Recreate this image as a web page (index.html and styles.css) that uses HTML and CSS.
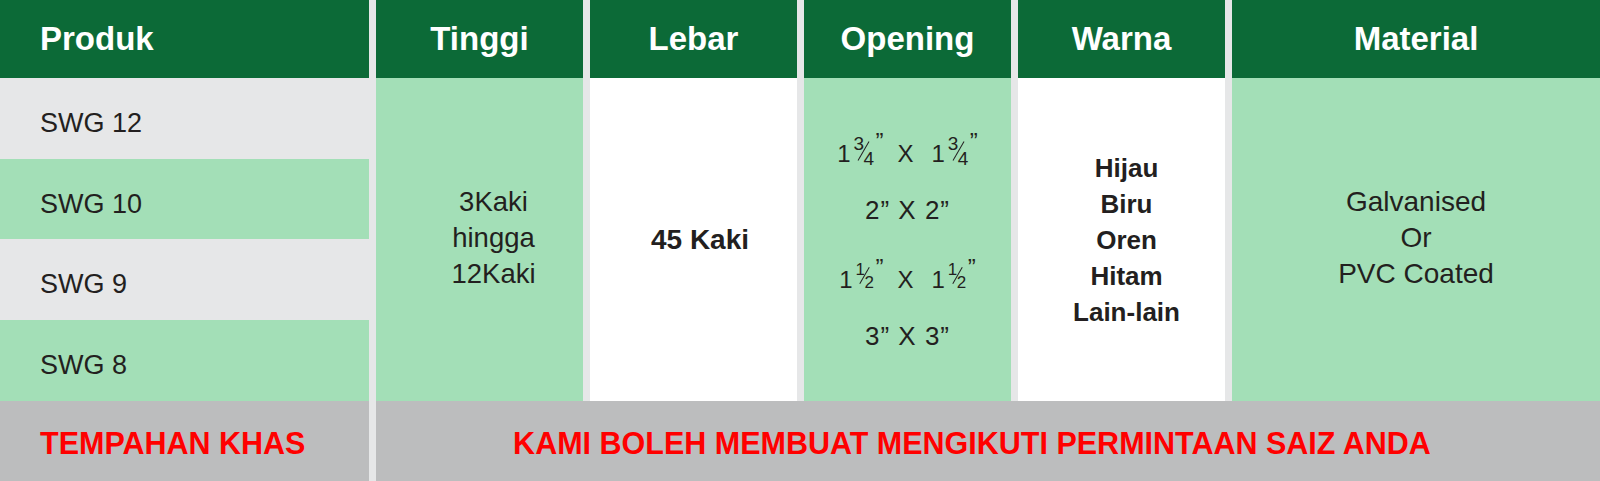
FILE: index.html
```html
<!DOCTYPE html>
<html lang="ms">
<head>
<meta charset="utf-8">
<title>Spesifikasi Produk</title>
<link rel="stylesheet" href="styles.css">
</head>
<body>
<div class="table">
  <div class="hd hd-left c1">Produk</div>
  <div class="hd c2">Tinggi</div>
  <div class="hd c3">Lebar</div>
  <div class="hd c4">Opening</div>
  <div class="hd c5">Warna</div>
  <div class="hd c6">Material</div>

  <div class="prod r2">SWG 12</div>
  <div class="prod r3 green">SWG 10</div>
  <div class="prod r4">SWG 9</div>
  <div class="prod r5 green">SWG 8</div>

  <div class="body c2 green tinggi">
    <div>3Kaki</div>
    <div>hingga</div>
    <div>12Kaki</div>
  </div>
  <div class="body c3 white lebar">
    <div>45 Kaki</div>
  </div>
  <div class="body c4 green opening">
    <div class="ln small">1<span class="fr big"><span class="n">3</span><span class="sl"></span><span class="d">4</span></span><span class="qt">&#8221;</span><span class="x">X</span>1<span class="fr big"><span class="n">3</span><span class="sl"></span><span class="d">4</span></span><span class="qt">&#8221;</span></div>
    <div class="ln large l2">2&#8221; X 2&#8221;</div>
    <div class="ln small l3">1<span class="fr half"><span class="n">1</span><span class="sl"></span><span class="d">2</span></span><span class="qt">&#8221;</span><span class="x">X</span>1<span class="fr half"><span class="n">1</span><span class="sl"></span><span class="d">2</span></span><span class="qt">&#8221;</span></div>
    <div class="ln large l4">3&#8221; X 3&#8221;</div>
  </div>
  <div class="body c5 white warna">
    <div>Hijau</div>
    <div>Biru</div>
    <div>Oren</div>
    <div>Hitam</div>
    <div>Lain-lain</div>
  </div>
  <div class="body c6 green material">
    <div>Galvanised</div>
    <div>Or</div>
    <div>PVC Coated</div>
  </div>

  <div class="foot foot-left">TEMPAHAN KHAS</div>
  <div class="foot foot-wide">KAMI BOLEH MEMBUAT MENGIKUTI PERMINTAAN SAIZ ANDA</div>
</div>
</body>
</html>
```

FILE: styles.css
```css
html, body {
  margin: 0;
  padding: 0;
}

body {
  background: #e6e7e8;
  font-family: "Liberation Sans", Arial, sans-serif;
  color: #231f20;
}

.table {
  display: grid;
  grid-template-columns: 369px 207px 207px 207px 207px 368px;
  grid-template-rows: 78px 81px 80px 81px 81px 80px;
  column-gap: 7px;
  width: 1600px;
  height: 481px;
}

.c1 { grid-column: 1; }
.c2 { grid-column: 2; }
.c3 { grid-column: 3; }
.c4 { grid-column: 4; }
.c5 { grid-column: 5; }
.c6 { grid-column: 6; }

.hd {
  grid-row: 1;
  background: #0c6a37;
  color: #ffffff;
  font-weight: bold;
  font-size: 33px;
  display: flex;
  align-items: center;
  justify-content: center;
}

.hd-left {
  justify-content: flex-start;
  padding-left: 40px;
}

.prod {
  grid-column: 1;
  display: flex;
  align-items: center;
  padding-left: 40px;
  padding-top: 10px;
  box-sizing: border-box;
  font-size: 27px;
}

.r2 { grid-row: 2; }
.r3 { grid-row: 3; }
.r4 { grid-row: 4; }
.r5 { grid-row: 5; }

.green { background: #a3dfb7; }
.white { background: #ffffff; }

.body {
  grid-row: 2 / 6;
  display: flex;
  flex-direction: column;
  justify-content: center;
  align-items: center;
  text-align: center;
  box-sizing: border-box;
}

.tinggi {
  font-size: 27.5px;
  line-height: 36px;
  padding-left: 28px;
  padding-bottom: 4px;
}

.lebar {
  font-size: 28px;
  font-weight: bold;
  padding-left: 13px;
}

.warna {
  font-size: 26px;
  font-weight: bold;
  line-height: 36px;
  padding-left: 10px;
}

.material {
  font-size: 28px;
  line-height: 36px;
  padding-bottom: 4px;
}

.opening {
  padding-top: 10px;
}

.ln {
  line-height: 36px;
  white-space: nowrap;
}

.ln.small { font-size: 24px; }
.ln.large { font-size: 26px; letter-spacing: 1px; }
.l2 { margin-top: 20px; }
.l3 { margin-top: 34px; }
.l4 { margin-top: 20px; }

.fr {
  display: inline-grid;
  margin-left: 3px;
}

.fr.big {
  font-size: 19px;
  line-height: 15px;
  grid-template-columns: 10px 11px;
  grid-template-rows: 15px 15px;
  vertical-align: 12px;
}

.fr.half {
  font-size: 17px;
  line-height: 13px;
  grid-template-columns: 9px 10px;
  grid-template-rows: 13px 13px;
  vertical-align: 13px;
}

.fr .n {
  grid-area: 1 / 1 / 2 / 2;
  justify-self: start;
}

.fr .d {
  grid-area: 2 / 2 / 3 / 3;
  justify-self: start;
}

.fr .sl {
  grid-area: 1 / 1 / 3 / 3;
  justify-self: center;
  align-self: center;
  width: 1.2px;
  background: #231f20;
  transform: rotate(30deg);
}

.fr.big .sl { height: 22px; }
.fr.half .sl { height: 19px; }

.qt {
  line-height: 0;
  font-size: 24px;
  vertical-align: 12px;
  margin-left: 1px;
}

.x {
  margin: 0 18px 0 14px;
}

.foot {
  grid-row: 6;
  background: #bcbdbe;
  color: #ff0000;
  font-weight: bold;
  display: flex;
  align-items: center;
  padding-top: 4px;
  box-sizing: border-box;
  font-size: 30.5px;
}

.foot-left {
  grid-column: 1;
  padding-left: 40px;
}

.foot-wide {
  grid-column: 2 / 7;
  justify-content: center;
  padding-right: 32px;
}
```
